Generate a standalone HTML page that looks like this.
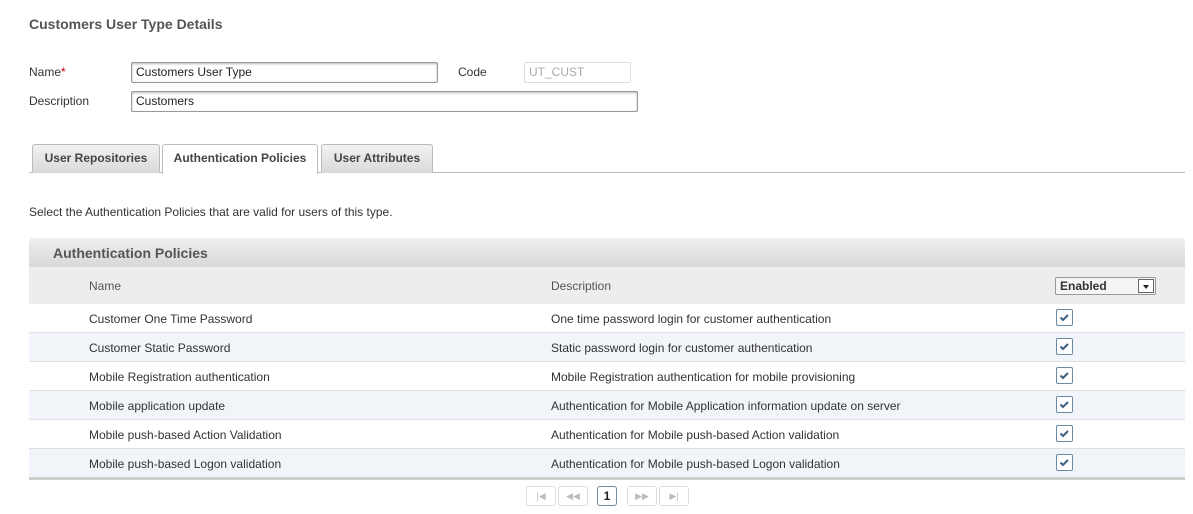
<!DOCTYPE html>
<html><head><style>
*{margin:0;padding:0;box-sizing:border-box}
body{width:1193px;height:514px;background:#fff;font-family:"Liberation Sans",Arial,sans-serif;font-size:12px;color:#333;position:relative;overflow:hidden}
.a{position:absolute}
.inp{position:absolute;height:21px;border:1px solid #999;border-radius:2px;box-shadow:inset 0 1px 2px #bbb;padding:2px 4px;font-size:12px;color:#222}
.tab{position:absolute;top:144px;height:29px;border:1px solid #bbb;border-bottom:none;border-radius:3px 3px 0 0;background:linear-gradient(#f2f2f2,#d9d9d9);font-weight:bold;font-size:12px;color:#444;text-align:center;line-height:27px}
.row{position:absolute;left:29px;width:1156px;height:29px;border-bottom:1px solid #dde1e6;font-size:12px;color:#333;line-height:28px}
.row.alt{background:#f1f4f9}
.row span{position:absolute;top:1px}
.cb{position:absolute;left:1027px;top:5px;width:17px;height:17px;border:1px solid #6d8aa3;border-radius:2px;background:#fff}
.cb svg{display:block}
.pg{position:absolute;top:486px;height:20px;border:1px solid #ddd;border-radius:3px;color:#bbb;font-size:9px;text-align:center;line-height:18px}
</style></head><body>
<div class="a" style="left:29px;top:16px;font-size:14px;font-weight:bold;color:#555">Customers User Type Details</div>
<div class="a" style="left:29px;top:65px">Name<span style="color:#c00">*</span></div>
<div class="inp" style="left:131px;top:62px;width:307px">Customers User Type</div>
<div class="a" style="left:458px;top:65px">Code</div>
<div class="inp" style="left:524px;top:62px;width:107px;border-color:#ddd;box-shadow:none;color:#aaa">UT_CUST</div>
<div class="a" style="left:29px;top:94px">Description</div>
<div class="inp" style="left:131px;top:91px;width:507px">Customers</div>

<div class="a" style="left:29px;top:172px;width:1156px;border-top:1px solid #bbb"></div>
<div class="tab" style="left:32px;width:128px">User Repositories</div>
<div class="tab" style="left:162px;width:156px;background:#fff;height:30px">Authentication Policies</div>
<div class="tab" style="left:321px;width:112px">User Attributes</div>

<div class="a" style="left:29px;top:205px">Select the Authentication Policies that are valid for users of this type.</div>

<div class="a" style="left:29px;top:238px;width:1156px;height:29px;background:linear-gradient(#efefef,#d8d8d8);border-radius:4px 4px 0 0;font-weight:bold;font-size:14px;color:#555;line-height:31px;padding-left:24px">Authentication Policies</div>
<div class="a" style="left:29px;top:267px;width:1156px;height:37px;background:#ededed;color:#555;line-height:39px">
<span class="a" style="left:60px">Name</span><span class="a" style="left:522px">Description</span>
<div class="a" style="left:1026px;top:10px;width:101px;height:18px;border:1px solid #999;border-radius:2px;background:#f5f5f5;font-weight:bold;font-size:12px;color:#333;line-height:16px;padding-left:4px">Enabled<div class="a" style="right:1px;top:1px;width:16px;height:14px;border:1px solid #666;background:#fff"><div class="a" style="left:4px;top:5px;border-left:3px solid transparent;border-right:3px solid transparent;border-top:4px solid #222"></div></div></div>
</div>

<div class="row" style="top:304px"><span style="left:60px">Customer One Time Password</span><span style="left:522px">One time password login for customer authentication</span><div class="cb"><svg width="15" height="15"><path d="M3.5 7.5l2.5 2.5 5-5" stroke="#3a5f80" stroke-width="2" fill="none"/></svg></div></div>
<div class="row alt" style="top:333px"><span style="left:60px">Customer Static Password</span><span style="left:522px">Static password login for customer authentication</span><div class="cb"><svg width="15" height="15"><path d="M3.5 7.5l2.5 2.5 5-5" stroke="#3a5f80" stroke-width="2" fill="none"/></svg></div></div>
<div class="row" style="top:362px"><span style="left:60px">Mobile Registration authentication</span><span style="left:522px">Mobile Registration authentication for mobile provisioning</span><div class="cb"><svg width="15" height="15"><path d="M3.5 7.5l2.5 2.5 5-5" stroke="#3a5f80" stroke-width="2" fill="none"/></svg></div></div>
<div class="row alt" style="top:391px"><span style="left:60px">Mobile application update</span><span style="left:522px">Authentication for Mobile Application information update on server</span><div class="cb"><svg width="15" height="15"><path d="M3.5 7.5l2.5 2.5 5-5" stroke="#3a5f80" stroke-width="2" fill="none"/></svg></div></div>
<div class="row" style="top:420px"><span style="left:60px">Mobile push-based Action Validation</span><span style="left:522px">Authentication for Mobile push-based Action validation</span><div class="cb"><svg width="15" height="15"><path d="M3.5 7.5l2.5 2.5 5-5" stroke="#3a5f80" stroke-width="2" fill="none"/></svg></div></div>
<div class="row alt" style="top:449px;border-bottom:3px solid #ccc;height:31px"><span style="left:60px">Mobile push-based Logon validation</span><span style="left:522px">Authentication for Mobile push-based Logon validation</span><div class="cb"><svg width="15" height="15"><path d="M3.5 7.5l2.5 2.5 5-5" stroke="#3a5f80" stroke-width="2" fill="none"/></svg></div></div>

<div class="pg" style="left:526px;width:30px">|◀</div>
<div class="pg" style="left:558px;width:30px">◀◀</div>
<div class="pg" style="left:597px;width:20px;border-color:#6d8aa3;color:#222;font-size:12px;font-weight:bold">1</div>
<div class="pg" style="left:627px;width:30px">▶▶</div>
<div class="pg" style="left:659px;width:30px">▶|</div>
</body></html>
